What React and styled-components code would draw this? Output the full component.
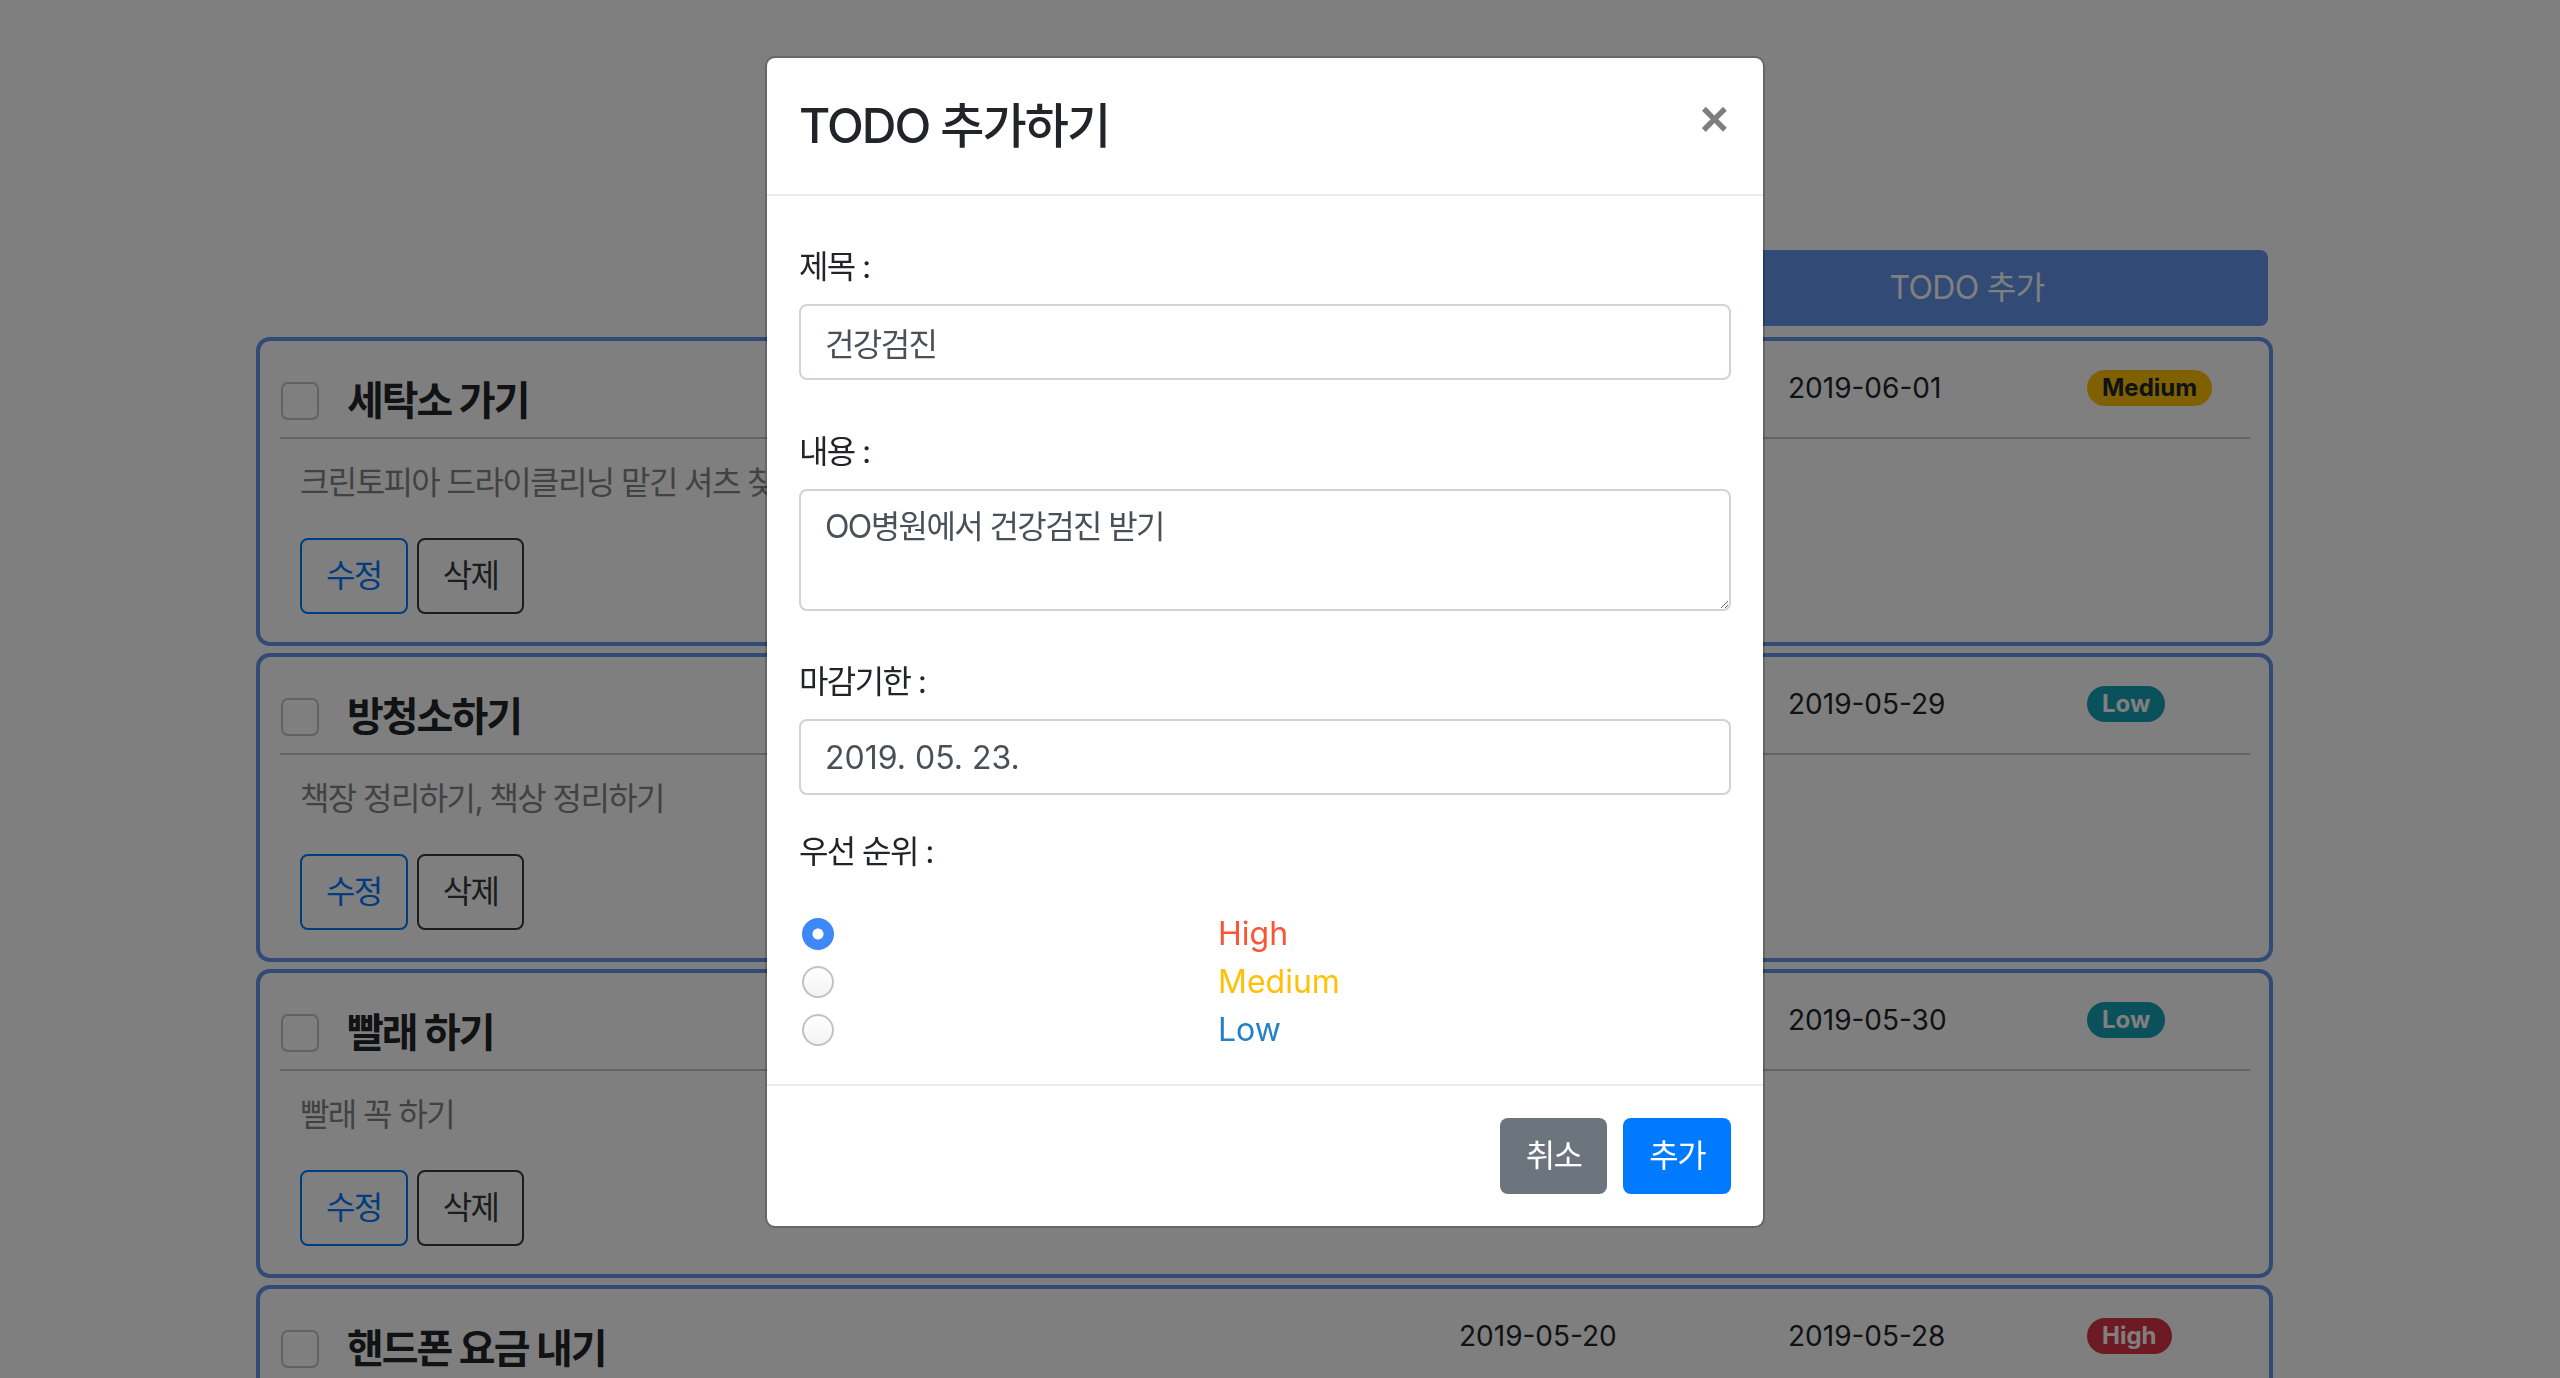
import React from "react";
import styled, { createGlobalStyle } from "styled-components";

const GlobalStyle = createGlobalStyle`
  * {
    box-sizing: border-box;
  }
  html,
  body {
    margin: 0;
    padding: 0;
    width: 2560px;
    height: 1378px;
    overflow: hidden;
    background: #fff;
  }
  body {
    font-family: Inter, "Noto Sans CJK KR", sans-serif;
    color: #212529;
  }
`;

const todos = [
  {
    id: 1,
    title: "세탁소 가기",
    desc: "크린토피아 드라이클리닝 맡긴 셔츠 찾기",
    created: "2019-05-20",
    due: "2019-06-01",
    priority: "Medium",
  },
  {
    id: 2,
    title: "방청소하기",
    desc: "책장 정리하기, 책상 정리하기",
    created: "2019-05-21",
    due: "2019-05-29",
    priority: "Low",
  },
  {
    id: 3,
    title: "빨래 하기",
    desc: "빨래 꼭 하기",
    created: "2019-05-20",
    due: "2019-05-30",
    priority: "Low",
  },
  {
    id: 4,
    title: "핸드폰 요금 내기",
    desc: "이번 달 요금 확인하고 내기",
    created: "2019-05-20",
    due: "2019-05-28",
    priority: "High",
  },
];

const badgeColors = {
  High: { bg: "#dc3545", fg: "#fff" },
  Medium: { bg: "#ffc107", fg: "#212529" },
  Low: { bg: "#17a2b8", fg: "#fff" },
};

const priorities = [
  { value: "High", color: "#fa5535" },
  { value: "Medium", color: "#ffc107" },
  { value: "Low", color: "#2580c5" },
];

export default function App() {
  return (
    <>
      <GlobalStyle />
      <Page>
        <Board>
          <Toolbar>
            <AddButton>TODO 추가</AddButton>
          </Toolbar>
          {todos.map((todo) => (
            <Card key={todo.id}>
              <CardHead>
                <TitleGroup>
                  <Check type="checkbox" />
                  <Title>{todo.title}</Title>
                </TitleGroup>
                <Meta>
                  <DateCell $width={329}>{todo.created}</DateCell>
                  <DateCell $width={299}>{todo.due}</DateCell>
                  <BadgeCell>
                    <Badge
                      $bg={badgeColors[todo.priority].bg}
                      $fg={badgeColors[todo.priority].fg}
                    >
                      {todo.priority}
                    </Badge>
                  </BadgeCell>
                </Meta>
              </CardHead>
              <CardBody>
                <Desc>{todo.desc}</Desc>
                <Actions>
                  <OutlineButton $color="#007bff">수정</OutlineButton>
                  <OutlineButton $color="#343a40">삭제</OutlineButton>
                </Actions>
              </CardBody>
            </Card>
          ))}
        </Board>
      </Page>

      <Backdrop />
      <ModalLayer>
        <Dialog>
          <ModalHeader>
            <ModalTitle>TODO 추가하기</ModalTitle>
            <CloseButton>×</CloseButton>
          </ModalHeader>
          <ModalBody>
            <Field $gap={45}>
              <Label>제목 :</Label>
              <TextInput type="text" defaultValue="건강검진" />
            </Field>
            <Field $gap={44}>
              <Label>내용 :</Label>
              <TextArea rows={2} defaultValue="OO병원에서 건강검진 받기" />
            </Field>
            <Field $gap={30}>
              <Label>마감기한 :</Label>
              <TextInput type="text" defaultValue="2019. 05. 23." $plain />
            </Field>
            <Field $gap={0}>
              <Label $after={34}>우선 순위 :</Label>
              <RadioList>
                {priorities.map((p, i) => (
                  <React.Fragment key={p.value}>
                    <Radio
                      type="radio"
                      name="priority"
                      defaultChecked={i === 0}
                    />
                    <OptionLabel $color={p.color}>{p.value}</OptionLabel>
                  </React.Fragment>
                ))}
              </RadioList>
            </Field>
          </ModalBody>
          <ModalFooter>
            <FooterButton $bg="#6c757d">취소</FooterButton>
            <FooterButton $bg="#007bff">추가</FooterButton>
          </ModalFooter>
        </Dialog>
      </ModalLayer>
    </>
  );
}

/* ---------- todo list ---------- */

const Page = styled.div`
  padding: 250px 0 0 256px;
`;

const Board = styled.div`
  width: 2017px;
`;

const Toolbar = styled.div`
  display: flex;
  justify-content: flex-end;
  padding-right: 5px;
  margin-bottom: 11px;
`;

const AddButton = styled.button`
  width: 602px;
  height: 76px;
  border: 0;
  border-radius: 8px;
  background: cornflowerblue;
  color: #fff;
  font-family: inherit;
  font-size: 32px;
  line-height: 48px;
  letter-spacing: -0.02em;
`;

const Card = styled.div`
  height: 309px;
  margin-bottom: 7px;
  background: #fff;
  border: 4px solid cornflowerblue;
  border-radius: 14px;
`;

const CardHead = styled.div`
  display: flex;
  align-items: flex-start;
  height: 98px;
  margin: 0 19px 0 20px;
  border-bottom: 2px solid #bdc7d2;
`;

const TitleGroup = styled.div`
  flex: 1;
  display: flex;
  align-items: center;
  margin-top: 36px;
`;

const Check = styled.input`
  appearance: none;
  width: 38px;
  height: 38px;
  margin: 0 0 0 1px;
  background: #fff;
  border: 2px solid #c4c4c4;
  border-radius: 7px;
`;

const Title = styled.h4`
  margin: 0 0 0 28px;
  font-size: 40px;
  font-weight: 700;
  line-height: 48px;
  letter-spacing: -0.05em;
  color: #212529;
`;

const Meta = styled.div`
  display: flex;
  align-items: center;
  height: 48px;
  margin-top: 23px;
`;

const DateCell = styled.div`
  width: ${(p) => p.$width}px;
  font-size: 28px;
  line-height: 48px;
  color: #212529;
`;

const BadgeCell = styled.div`
  width: 163px;
  display: flex;
  align-items: center;
`;

const Badge = styled.span`
  display: inline-block;
  padding: 6px 15px;
  border-radius: 999px;
  background: ${(p) => p.$bg};
  color: ${(p) => p.$fg};
  font-size: 24px;
  font-weight: 700;
  line-height: 1;
`;

const CardBody = styled.div`
  padding: 20px 40px 0;
`;

const Desc = styled.p`
  margin: 0 0 31px;
  font-size: 32px;
  line-height: 48px;
  letter-spacing: -0.05em;
  color: #858585;
`;

const Actions = styled.div`
  display: flex;
  gap: 9px;
`;

const OutlineButton = styled.button`
  height: 76px;
  padding: 0 24px;
  background: transparent;
  border: 2px solid ${(p) => p.$color};
  border-radius: 8px;
  color: ${(p) => p.$color};
  font-family: inherit;
  font-size: 32px;
  line-height: 48px;
  letter-spacing: -0.05em;
`;

/* ---------- modal ---------- */

const Backdrop = styled.div`
  position: fixed;
  inset: 0;
  background: rgba(0, 0, 0, 0.5);
`;

const ModalLayer = styled.div`
  position: fixed;
  inset: 0;
  padding-right: 30px;
`;

const Dialog = styled.div`
  width: 1000px;
  margin: 56px auto 0;
  background: #fff;
  background-clip: padding-box;
  border: 2px solid rgba(0, 0, 0, 0.2);
  border-radius: 10px;
`;

const ModalHeader = styled.div`
  display: flex;
  align-items: flex-start;
  padding: 32px;
  border-bottom: 2px solid #e9ecef;
`;

const ModalTitle = styled.h4`
  margin: 0;
  font-size: 48px;
  font-weight: 500;
  line-height: 72px;
  letter-spacing: -0.04em;
  color: #212529;
`;

const CloseButton = styled.button`
  margin: -32px -32px -32px auto;
  padding: 36px 34px 32px;
  background: transparent;
  border: 0;
  font-family: "Liberation Sans", sans-serif;
  font-size: 50px;
  font-weight: 700;
  line-height: 1;
  color: #000;
  opacity: 0.5;
  text-shadow: 0 2px 0 #fff;
`;

const ModalBody = styled.div`
  padding: 44px 32px 30px;
`;

const Field = styled.div`
  margin-bottom: ${(p) => p.$gap}px;
`;

const Label = styled.label`
  display: block;
  padding-top: 3px;
  margin-bottom: ${(p) => p.$after ?? 13}px;
  font-size: 32px;
  line-height: 48px;
  letter-spacing: -0.05em;
  color: #212529;
`;

const TextInput = styled.input`
  display: block;
  width: 100%;
  height: 76px;
  padding: 12px 24px;
  border: 2px solid #ced4da;
  border-radius: 8px;
  background: #fff;
  font-family: inherit;
  font-size: 32px;
  line-height: 48px;
  letter-spacing: ${(p) => (p.$plain ? "0" : "-0.05em")};
  color: #495057;
  outline: none;
`;

const TextArea = styled.textarea`
  display: block;
  width: 100%;
  height: 122px;
  padding: 12px 24px;
  border: 2px solid #ced4da;
  border-radius: 8px;
  background: #fff;
  font-family: inherit;
  font-size: 32px;
  line-height: 48px;
  letter-spacing: -0.05em;
  color: #495057;
  outline: none;
`;

const RadioList = styled.div`
  display: grid;
  grid-template-columns: 419px auto;
  grid-auto-rows: 48px;
  align-items: center;
`;

const Radio = styled.input`
  appearance: none;
  width: 32px;
  height: 32px;
  margin: 0 0 0 3px;
  border-radius: 50%;
  border: 2px solid #c2c2c2;
  background: linear-gradient(#fff, #f3f3f3);

  &:checked {
    border: 0;
    background: radial-gradient(circle, #fff 0 5px, #3d87f6 6px);
  }
`;

const OptionLabel = styled.span`
  justify-self: start;
  font-size: 32px;
  line-height: 48px;
  color: ${(p) => p.$color};
`;

const ModalFooter = styled.div`
  display: flex;
  justify-content: flex-end;
  gap: 16px;
  padding: 32px;
  border-top: 2px solid #e9ecef;
`;

const FooterButton = styled.button`
  height: 76px;
  padding: 0 26px;
  border: 0;
  border-radius: 8px;
  background: ${(p) => p.$bg};
  color: #fff;
  font-family: inherit;
  font-size: 32px;
  line-height: 48px;
  letter-spacing: -0.05em;
`;
